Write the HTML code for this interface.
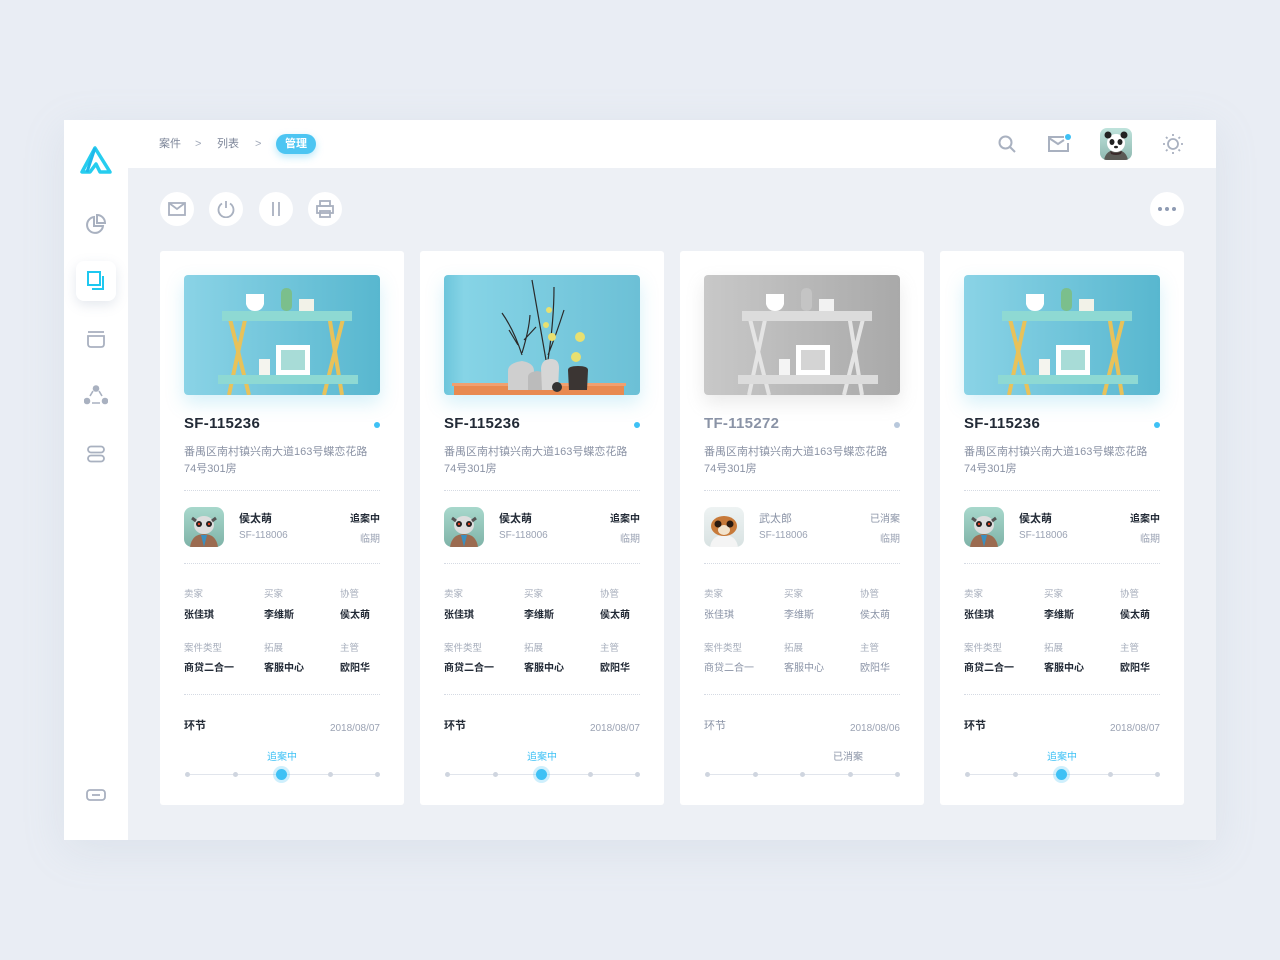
<!DOCTYPE html>
<html><head><meta charset="utf-8">
<style>
*{margin:0;padding:0;box-sizing:border-box}
body{width:1280px;height:960px;background:#e9edf4;font-family:"Liberation Sans","Noto Sans CJK SC",sans-serif;position:relative;overflow:hidden}
.panel{position:absolute;left:64px;top:120px;width:1152px;height:720px;background:#edf0f5;box-shadow:0 10px 40px rgba(150,165,190,.15)}
.side{position:absolute;left:0;top:0;width:64px;height:720px;background:#fff}
.head{position:absolute;left:64px;top:0;width:1088px;height:48px;background:#fff}
.abs{position:absolute}
.crumb{font-size:11px;color:#7d8699;top:17px;line-height:14px}
.sep{font-size:11px;color:#a0a8b8;top:17px;line-height:14px}
.tag{left:148px;top:14px;width:40px;height:20px;border-radius:10px;background:#4cc5f2;color:#fff;font-size:11px;text-align:center;line-height:20px;box-shadow:0 3px 8px rgba(76,197,242,.4);font-weight:bold}
.cb{width:34px;height:34px;border-radius:17px;background:#fff;display:flex;align-items:center;justify-content:center}
.card{position:absolute;top:131px;width:244px;height:554px;background:#fff;border-radius:3px}
.img{position:absolute;left:24px;top:24px;width:196px;height:120px;border-radius:4px;overflow:hidden;box-shadow:0 8px 18px rgba(90,200,230,.25)}
.gray .img{box-shadow:0 8px 18px rgba(150,150,150,.2)}
.t{position:absolute;left:24px;top:164px;font-size:15px;font-weight:bold;color:#222a36;letter-spacing:.3px}
.gray .t{color:#8a93a6}
.dot{position:absolute;left:214px;top:171px;width:6px;height:6px;border-radius:3px;background:#3ec1f5}
.gray .dot{background:#b8c8dc}
.addr{position:absolute;left:24px;top:193px;width:200px;font-size:11px;line-height:17px;color:#8b93a5}
.hr{position:absolute;left:24px;width:196px;border-top:1px dotted #d5dae3}
.av{position:absolute;left:24px;top:256px;width:40px;height:40px;border-radius:8px;overflow:hidden}
.nm{position:absolute;left:79px;top:259px;font-size:11px;color:#222a36;font-weight:bold}
.sf{position:absolute;left:79px;top:279px;font-size:10px;color:#9aa2b3}
.st{position:absolute;right:24px;top:259px;font-size:10px;color:#222a36;font-weight:bold}
.lq{position:absolute;right:24px;top:279px;font-size:10px;color:#9aa2b3}
.gray .nm,.gray .st{color:#8a93a6;font-weight:normal}
.lb{position:absolute;font-size:9.5px;color:#a6adbb}
.vl{position:absolute;font-size:10px;color:#222a36;font-weight:bold}
.gray .vl{color:#8a93a6;font-weight:normal}
.hj{position:absolute;left:24px;top:466px;font-size:11px;font-weight:bold;color:#222a36}
.gray .hj{color:#8a93a6;font-weight:normal}
.dt{position:absolute;right:24px;top:473px;font-size:10px;color:#9aa2b3;line-height:1}
.pr{position:absolute;left:0;width:244px;text-align:center;top:497px;font-size:10px;color:#3ec1f5}
.gray .pr{color:#8a93a6}
.tr{position:absolute;left:27px;top:523px;width:191px;height:1px;background:#e1e5ec}
.pd{position:absolute;top:521px;width:5px;height:5px;border-radius:3px;background:#cfd5df}
.big{position:absolute;left:116px;top:518px;width:11px;height:11px;border-radius:6px;background:#3ec1f5;box-shadow:0 0 0 3px rgba(62,193,245,.25)}
</style></head><body>
<div class="panel">
 <div class="side">
  <svg class="abs" style="left:15px;top:25px" width="34" height="30" viewBox="0 0 34 30"><path d="M16 3 L3 27 H11 L17 19 L21 27 H31 Z" fill="none" stroke="#26cdef" stroke-width="3.5" stroke-linejoin="round"/><path d="M16 3 L8 27" fill="none" stroke="#1fb8ea" stroke-width="3"/></svg>
  <svg class="abs" style="left:22px;top:94px" width="20" height="20" viewBox="0 0 20 20" fill="none" stroke="#a9b1c0" stroke-width="2"><path d="M8 3 A8 8 0 1 0 17 12 H8 Z"/><path d="M11 1 A8 8 0 0 1 19 9 H11 Z"/></svg>
  <div class="abs" style="left:12px;top:141px;width:40px;height:40px;border-radius:8px;background:#fff;box-shadow:0 4px 12px rgba(120,140,170,.2)"></div>
  <svg class="abs" style="left:22px;top:151px" width="20" height="20" viewBox="0 0 20 20" fill="none" stroke="#1ec8f0" stroke-width="2"><rect x="2" y="1" width="12" height="13"/><path d="M17 5 V18 H6"/></svg>
  <svg class="abs" style="left:23px;top:210px" width="18" height="18" viewBox="0 0 18 18" fill="none" stroke="#a9b1c0" stroke-width="1.8"><path d="M1 2 H17"/><path d="M1 6 H17 V14 Q17 17 14 17 H4 Q1 17 1 14 Z"/></svg>
  <svg class="abs" style="left:20px;top:265px" width="24" height="20" viewBox="0 0 24 20" fill="#a9b1c0" stroke="#a9b1c0" stroke-width="1.6"><circle cx="12" cy="3.5" r="2.5"/><circle cx="3" cy="16" r="2.5"/><circle cx="21" cy="16" r="2.5"/><path d="M9 6 L6 11 M15 6 L18 11 M8 18 H16" fill="none"/></svg>
  <svg class="abs" style="left:23px;top:325px" width="18" height="18" viewBox="0 0 18 18" fill="none" stroke="#a9b1c0" stroke-width="1.8"><rect x="1" y="1.5" width="16" height="6" rx="3"/><rect x="1" y="10.5" width="16" height="6" rx="3"/></svg>
  <svg class="abs" style="left:22px;top:669px" width="20" height="12" viewBox="0 0 20 12" fill="none" stroke="#a9b1c0" stroke-width="1.8"><rect x="1" y="1" width="18" height="10" rx="3"/><path d="M6 6 H14"/></svg>
 </div>
 <div class="head">
  <div class="abs crumb" style="left:31px">案件</div>
  <div class="abs sep" style="left:67px">&gt;</div>
  <div class="abs crumb" style="left:89px">列表</div>
  <div class="abs sep" style="left:127px">&gt;</div>
  <div class="abs tag">管理</div>
  <svg class="abs" style="left:870px;top:15px" width="18" height="18" viewBox="0 0 18 18" fill="none" stroke="#a9b1c0" stroke-width="2"><circle cx="7.5" cy="7.5" r="6"/><path d="M12 12 L17 17"/></svg>
  <svg class="abs" style="left:920px;top:13px" width="24" height="20" viewBox="0 0 24 20" fill="none" stroke="#a9b1c0" stroke-width="2"><path d="M16 4 H1 V18 H20 V10"/><path d="M1 5 L10 11 L16 7"/><circle cx="20" cy="4" r="3" fill="#3ec1f5" stroke="none"/></svg>
  <div class="abs" style="left:972px;top:8px;width:32px;height:32px;border-radius:7px;background:linear-gradient(#bfe3dc,#8fb8b0);overflow:hidden">
   <svg width="32" height="32" viewBox="0 0 32 32"><path d="M4 32 Q6 22 16 22 Q26 22 28 32Z" fill="#5a5a55"/><ellipse cx="16" cy="15" rx="9" ry="9" fill="#fff"/><circle cx="8" cy="7" r="3.5" fill="#222"/><circle cx="24" cy="7" r="3.5" fill="#222"/><ellipse cx="12" cy="14" rx="2.5" ry="3" fill="#222"/><ellipse cx="20" cy="14" rx="2.5" ry="3" fill="#222"/><ellipse cx="16" cy="19" rx="2" ry="1.3" fill="#222"/><path d="M10 23 Q16 27 22 23 L21 26 Q16 28 11 26Z" fill="#3a2a2a"/></svg>
  </div>
  <svg class="abs" style="left:1034px;top:13px" width="22" height="22" viewBox="0 0 22 22" fill="none" stroke="#a9b1c0" stroke-width="1.8"><circle cx="11" cy="11" r="5"/><path d="M11 1 V3 M11 19 V21 M1 11 H3 M19 11 H21 M4 4 L5.5 5.5 M16.5 16.5 L18 18 M4 18 L5.5 16.5 M16.5 5.5 L18 4"/></svg>
 </div>
 <div class="abs cb" style="left:96px;top:72px"><svg width="18" height="14" viewBox="0 0 18 14" fill="none" stroke="#a9b1c0" stroke-width="1.8"><rect x="1" y="1" width="16" height="12"/><path d="M1 1 L9 7 L17 1"/></svg></div>
 <div class="abs cb" style="left:145px;top:72px"><svg width="18" height="18" viewBox="0 0 18 18" fill="none" stroke="#a9b1c0" stroke-width="1.8"><path d="M5 3.5 A7.5 7.5 0 1 0 13 3.5"/><path d="M9 1 V8"/></svg></div>
 <div class="abs cb" style="left:195px;top:72px"><svg width="12" height="16" viewBox="0 0 12 16" fill="none" stroke="#a9b1c0" stroke-width="1.8"><path d="M3 1 V15 M9 1 V15"/></svg></div>
 <div class="abs cb" style="left:244px;top:72px"><svg width="18" height="18" viewBox="0 0 18 18" fill="none" stroke="#a9b1c0" stroke-width="1.8"><rect x="4" y="1" width="10" height="5"/><rect x="1" y="6" width="16" height="7"/><rect x="4" y="11" width="10" height="6"/></svg></div>
 <div class="abs cb" style="left:1086px;top:72px"><svg width="18" height="4" viewBox="0 0 18 4" fill="#8f9bb3"><circle cx="2" cy="2" r="2"/><circle cx="9" cy="2" r="2"/><circle cx="16" cy="2" r="2"/></svg></div>
</div>

<div class="card" style="left:160px;top:251px">
 <div class="img"><svg width="196" height="120" viewBox="0 0 196 120"><defs><linearGradient id="b1" x1="0" x2="1"><stop offset="0" stop-color="#8ad3e6"/><stop offset="1" stop-color="#58b7cf"/></linearGradient></defs><rect width="196" height="120" fill="url(#b1)"/><g stroke="#e8c25a" stroke-width="4"><path d="M45 40 L65 120 M160 40 L140 120 M45 120 L62 40 M158 120 L145 40"/></g><rect x="38" y="36" width="130" height="10" fill="#8ed9d3"/><rect x="34" y="100" width="140" height="9" fill="#8ed9d3"/><path d="M62 19 h18 v10 q-2 7 -9 7 q-7 0 -9 -7z" fill="#fff"/><rect x="97" y="13" width="11" height="23" rx="5" fill="#7bbf8c"/><rect x="115" y="24" width="15" height="12" fill="#f2f2e8"/><rect x="75" y="84" width="11" height="16" fill="#f4f4ee"/><rect x="92" y="70" width="34" height="30" fill="#fff"/><rect x="97" y="75" width="24" height="20" fill="#a8dcd7"/></svg></div>
 <div class="t">SF-115236</div><div class="dot"></div>
 <div class="addr">番禺区南村镇兴南大道163号蝶恋花路<br>74号301房</div>
 <div class="hr" style="top:239px"></div>
 <div class="av" style="background:linear-gradient(#a8d8cc,#7fb3a8)"><svg width="40" height="40" viewBox="0 0 40 40"><path d="M6 40 Q8 27 20 27 Q32 27 34 40Z" fill="#9b6b50"/><path d="M17 28 L20 40 L23 28" fill="#3a8fc0"/><ellipse cx="20" cy="18" rx="10" ry="9" fill="#ddd"/><ellipse cx="15" cy="17" rx="3" ry="3" fill="#222"/><ellipse cx="25" cy="17" rx="3" ry="3" fill="#222"/><circle cx="15" cy="17" r="1.2" fill="#e04020"/><circle cx="25" cy="17" r="1.2" fill="#e04020"/><path d="M8 11 L12 14 M32 11 L28 14" stroke="#555" stroke-width="3"/></svg></div>
 <div class="nm">侯太萌</div><div class="sf">SF-118006</div><div class="st">追案中</div><div class="lq">临期</div>
 <div class="hr" style="top:312px"></div>
 <div class="lb" style="left:24px;top:335px">卖家</div><div class="lb" style="left:104px;top:335px">买家</div><div class="lb" style="left:180px;top:335px">协管</div>
 <div class="vl" style="left:24px;top:355px">张佳琪</div><div class="vl" style="left:104px;top:355px">李维斯</div><div class="vl" style="left:180px;top:355px">侯太萌</div>
 <div class="lb" style="left:24px;top:389px">案件类型</div><div class="lb" style="left:104px;top:389px">拓展</div><div class="lb" style="left:180px;top:389px">主管</div>
 <div class="vl" style="left:24px;top:408px">商贷二合一</div><div class="vl" style="left:104px;top:408px">客服中心</div><div class="vl" style="left:180px;top:408px">欧阳华</div>
 <div class="hr" style="top:443px"></div>
 <div class="hj">环节</div><div class="dt">2018/08/07</div><div class="pr">追案中</div>
 <div class="tr"></div><div class="pd" style="left:25px"></div><div class="pd" style="left:73px"></div><div class="pd" style="left:168px"></div><div class="pd" style="left:215px"></div><div class="big"></div>
</div>

<div class="card" style="left:420px;top:251px">
 <div class="img"><svg width="196" height="120" viewBox="0 0 196 120"><defs><linearGradient id="b2" x1="0" x2="1"><stop offset="0" stop-color="#6cc5db"/><stop offset=".1" stop-color="#86d4e6"/><stop offset="1" stop-color="#6cc0d6"/></linearGradient></defs><rect width="196" height="120" fill="url(#b2)"/><g stroke="#2a2a2a" stroke-width="1.2" fill="none"><path d="M78 80 Q70 55 58 38 M78 78 Q85 55 86 40 M74 70 L65 55 M80 65 L92 52"/><path d="M102 85 Q96 50 88 5 M104 85 Q110 45 110 12 M104 80 Q112 60 120 35"/></g><g fill="#e8e070"><circle cx="105" cy="35" r="3"/><circle cx="102" cy="50" r="3"/><circle cx="108" cy="62" r="4"/><circle cx="136" cy="62" r="5"/><circle cx="132" cy="82" r="5"/></g><rect x="10" y="110" width="170" height="10" fill="#e88a50"/><rect x="8" y="108" width="174" height="3" fill="#f0a070"/><path d="M64 115 L64 96 Q64 88 78 86 Q90 88 90 96 L90 115Z" fill="#cfcfcf"/><path d="M84 115 L84 102 Q84 97 93 96 Q102 97 102 102 L102 115Z" fill="#bbb"/><path d="M98 115 L97 93 Q98 84 107 84 Q115 84 115 93 L114 115Z" fill="#d6d6d6"/><path d="M125 115 L124 95 Q124 91 134 91 Q144 91 144 95 L143 115Z" fill="#3b3533"/><circle cx="113" cy="112" r="5" fill="#333"/></svg></div>
 <div class="t">SF-115236</div><div class="dot"></div>
 <div class="addr">番禺区南村镇兴南大道163号蝶恋花路<br>74号301房</div>
 <div class="hr" style="top:239px"></div>
 <div class="av" style="background:linear-gradient(#a8d8cc,#7fb3a8)"><svg width="40" height="40" viewBox="0 0 40 40"><path d="M6 40 Q8 27 20 27 Q32 27 34 40Z" fill="#9b6b50"/><path d="M17 28 L20 40 L23 28" fill="#3a8fc0"/><ellipse cx="20" cy="18" rx="10" ry="9" fill="#ddd"/><ellipse cx="15" cy="17" rx="3" ry="3" fill="#222"/><ellipse cx="25" cy="17" rx="3" ry="3" fill="#222"/><circle cx="15" cy="17" r="1.2" fill="#e04020"/><circle cx="25" cy="17" r="1.2" fill="#e04020"/><path d="M8 11 L12 14 M32 11 L28 14" stroke="#555" stroke-width="3"/></svg></div>
 <div class="nm">侯太萌</div><div class="sf">SF-118006</div><div class="st">追案中</div><div class="lq">临期</div>
 <div class="hr" style="top:312px"></div>
 <div class="lb" style="left:24px;top:335px">卖家</div><div class="lb" style="left:104px;top:335px">买家</div><div class="lb" style="left:180px;top:335px">协管</div>
 <div class="vl" style="left:24px;top:355px">张佳琪</div><div class="vl" style="left:104px;top:355px">李维斯</div><div class="vl" style="left:180px;top:355px">侯太萌</div>
 <div class="lb" style="left:24px;top:389px">案件类型</div><div class="lb" style="left:104px;top:389px">拓展</div><div class="lb" style="left:180px;top:389px">主管</div>
 <div class="vl" style="left:24px;top:408px">商贷二合一</div><div class="vl" style="left:104px;top:408px">客服中心</div><div class="vl" style="left:180px;top:408px">欧阳华</div>
 <div class="hr" style="top:443px"></div>
 <div class="hj">环节</div><div class="dt">2018/08/07</div><div class="pr">追案中</div>
 <div class="tr"></div><div class="pd" style="left:25px"></div><div class="pd" style="left:73px"></div><div class="pd" style="left:168px"></div><div class="pd" style="left:215px"></div><div class="big"></div>
</div>

<div class="card gray" style="left:680px;top:251px">
 <div class="img"><svg width="196" height="120" viewBox="0 0 196 120"><defs><linearGradient id="b3" x1="0" x2="1"><stop offset="0" stop-color="#c8c8c8"/><stop offset="1" stop-color="#a9a9a9"/></linearGradient></defs><rect width="196" height="120" fill="url(#b3)"/><g stroke="#e4e4e4" stroke-width="4"><path d="M45 40 L65 120 M160 40 L140 120 M45 120 L62 40 M158 120 L145 40"/></g><rect x="38" y="36" width="130" height="10" fill="#dcdcdc"/><rect x="34" y="100" width="140" height="9" fill="#dcdcdc"/><path d="M62 19 h18 v10 q-2 7 -9 7 q-7 0 -9 -7z" fill="#fff"/><rect x="97" y="13" width="11" height="23" rx="5" fill="#c4c4c4"/><rect x="115" y="24" width="15" height="12" fill="#f2f2f2"/><rect x="75" y="84" width="11" height="16" fill="#f4f4f4"/><rect x="92" y="70" width="34" height="30" fill="#fff"/><rect x="97" y="75" width="24" height="20" fill="#d4d4d4"/></svg></div>
 <div class="t">TF-115272</div><div class="dot"></div>
 <div class="addr">番禺区南村镇兴南大道163号蝶恋花路<br>74号301房</div>
 <div class="hr" style="top:239px"></div>
 <div class="av" style="background:linear-gradient(#eef3f3,#d8e2e2)"><svg width="40" height="40" viewBox="0 0 40 40"><path d="M6 40 Q8 28 20 28 Q32 28 34 40Z" fill="#f4f4f4"/><ellipse cx="20" cy="19" rx="13" ry="10" fill="#c77a3a"/><ellipse cx="20" cy="23" rx="6" ry="5" fill="#f3e3cc"/><circle cx="14" cy="17" r="3.5" fill="#2a1a10"/><circle cx="26" cy="17" r="3.5" fill="#2a1a10"/></svg></div>
 <div class="nm">武太郎</div><div class="sf">SF-118006</div><div class="st">已消案</div><div class="lq">临期</div>
 <div class="hr" style="top:312px"></div>
 <div class="lb" style="left:24px;top:335px">卖家</div><div class="lb" style="left:104px;top:335px">买家</div><div class="lb" style="left:180px;top:335px">协管</div>
 <div class="vl" style="left:24px;top:355px">张佳琪</div><div class="vl" style="left:104px;top:355px">李维斯</div><div class="vl" style="left:180px;top:355px">侯太萌</div>
 <div class="lb" style="left:24px;top:389px">案件类型</div><div class="lb" style="left:104px;top:389px">拓展</div><div class="lb" style="left:180px;top:389px">主管</div>
 <div class="vl" style="left:24px;top:408px">商贷二合一</div><div class="vl" style="left:104px;top:408px">客服中心</div><div class="vl" style="left:180px;top:408px">欧阳华</div>
 <div class="hr" style="top:443px"></div>
 <div class="hj">环节</div><div class="dt">2018/08/06</div><div class="pr" style="left:46px">已消案</div>
 <div class="tr"></div><div class="pd" style="left:25px"></div><div class="pd" style="left:73px"></div><div class="pd" style="left:120px"></div><div class="pd" style="left:168px"></div><div class="pd" style="left:215px"></div>
</div>

<div class="card" style="left:940px;top:251px">
 <div class="img"><svg width="196" height="120" viewBox="0 0 196 120"><rect width="196" height="120" fill="url(#b1)"/><g stroke="#e8c25a" stroke-width="4"><path d="M45 40 L65 120 M160 40 L140 120 M45 120 L62 40 M158 120 L145 40"/></g><rect x="38" y="36" width="130" height="10" fill="#8ed9d3"/><rect x="34" y="100" width="140" height="9" fill="#8ed9d3"/><path d="M62 19 h18 v10 q-2 7 -9 7 q-7 0 -9 -7z" fill="#fff"/><rect x="97" y="13" width="11" height="23" rx="5" fill="#7bbf8c"/><rect x="115" y="24" width="15" height="12" fill="#f2f2e8"/><rect x="75" y="84" width="11" height="16" fill="#f4f4ee"/><rect x="92" y="70" width="34" height="30" fill="#fff"/><rect x="97" y="75" width="24" height="20" fill="#a8dcd7"/></svg></div>
 <div class="t">SF-115236</div><div class="dot"></div>
 <div class="addr">番禺区南村镇兴南大道163号蝶恋花路<br>74号301房</div>
 <div class="hr" style="top:239px"></div>
 <div class="av" style="background:linear-gradient(#a8d8cc,#7fb3a8)"><svg width="40" height="40" viewBox="0 0 40 40"><path d="M6 40 Q8 27 20 27 Q32 27 34 40Z" fill="#9b6b50"/><path d="M17 28 L20 40 L23 28" fill="#3a8fc0"/><ellipse cx="20" cy="18" rx="10" ry="9" fill="#ddd"/><ellipse cx="15" cy="17" rx="3" ry="3" fill="#222"/><ellipse cx="25" cy="17" rx="3" ry="3" fill="#222"/><circle cx="15" cy="17" r="1.2" fill="#e04020"/><circle cx="25" cy="17" r="1.2" fill="#e04020"/><path d="M8 11 L12 14 M32 11 L28 14" stroke="#555" stroke-width="3"/></svg></div>
 <div class="nm">侯太萌</div><div class="sf">SF-118006</div><div class="st">追案中</div><div class="lq">临期</div>
 <div class="hr" style="top:312px"></div>
 <div class="lb" style="left:24px;top:335px">卖家</div><div class="lb" style="left:104px;top:335px">买家</div><div class="lb" style="left:180px;top:335px">协管</div>
 <div class="vl" style="left:24px;top:355px">张佳琪</div><div class="vl" style="left:104px;top:355px">李维斯</div><div class="vl" style="left:180px;top:355px">侯太萌</div>
 <div class="lb" style="left:24px;top:389px">案件类型</div><div class="lb" style="left:104px;top:389px">拓展</div><div class="lb" style="left:180px;top:389px">主管</div>
 <div class="vl" style="left:24px;top:408px">商贷二合一</div><div class="vl" style="left:104px;top:408px">客服中心</div><div class="vl" style="left:180px;top:408px">欧阳华</div>
 <div class="hr" style="top:443px"></div>
 <div class="hj">环节</div><div class="dt">2018/08/07</div><div class="pr">追案中</div>
 <div class="tr"></div><div class="pd" style="left:25px"></div><div class="pd" style="left:73px"></div><div class="pd" style="left:168px"></div><div class="pd" style="left:215px"></div><div class="big"></div>
</div>
</body></html>
